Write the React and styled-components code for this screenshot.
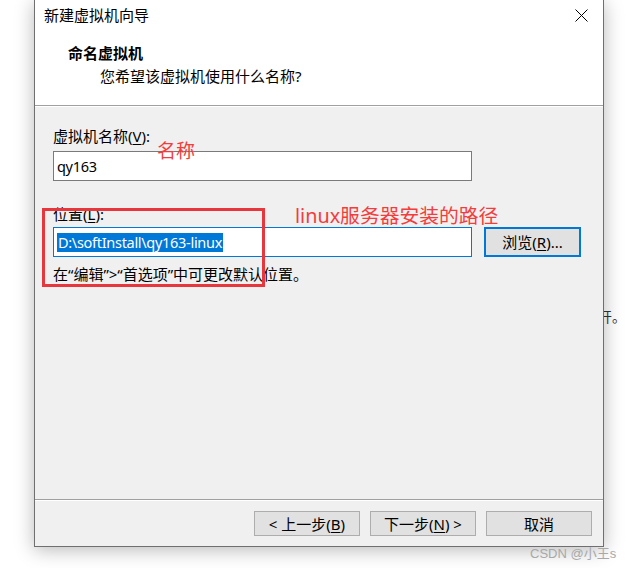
import React from "react";
import styled, { createGlobalStyle } from "styled-components";

const Global = createGlobalStyle`
  html, body {
    margin: 0;
    padding: 0;
    background: #fff;
  }
  * {
    box-sizing: border-box;
  }
`;

const UI_FONT = `"Noto Sans", "Noto Sans CJK SC", sans-serif`;

const Page = styled.div`
  position: relative;
  width: 626px;
  height: 568px;
  overflow: hidden;
  background: #fff;
  padding-left: 34px;
  font-family: ${UI_FONT};
  font-size: 15px;
  color: #000;
`;

const BehindText = styled.div`
  position: absolute;
  left: 598px;
  top: 306px;
  font-size: 14px;
  color: #333;
  font-family: "Noto Sans CJK SC", sans-serif;
`;

const Window = styled.div`
  position: relative;
  width: 570px;
  height: 547px;
  display: flex;
  flex-direction: column;
  border: 1px solid #6f6f6f;
  border-top: none;
  background: #f0f0f0;
  box-shadow: 0 3px 18px rgba(0, 0, 0, 0.28);
`;

const TitleBar = styled.div`
  height: 31px;
  display: flex;
  align-items: center;
  justify-content: space-between;
  padding: 0 15px 1px 9px;
  background: #fff;
  line-height: 20px;
`;

const CloseIcon = () => (
  <svg width="13" height="13" viewBox="0 0 13 13">
    <path d="M0.5 0.5L12.5 12.5M12.5 0.5L0.5 12.5" stroke="#000" strokeWidth="1" fill="none" />
  </svg>
);

const Header = styled.div`
  height: 75px;
  background: #fff;
  padding: 12px 0 0 33px;
  border-bottom: 1px solid #a0a0a0;
  box-shadow: 0 1px 0 #fff;
`;

const HeaderTitle = styled.div`
  font-weight: 700;
  line-height: 20px;
  font-family: "Noto Sans CJK SC", sans-serif;
`;

const HeaderSub = styled.div`
  line-height: 20px;
  margin: 3px 0 0 32px;
`;

const Body = styled.div`
  flex: 1;
  margin-top: 1px;
  padding: 19px 0 0 18px;
  display: flex;
  flex-direction: column;
  border-bottom: 1px solid #a0a0a0;
`;

const Label = styled.div`
  line-height: 20px;
  margin-top: ${({ $gap }) => $gap || 0}px;
`;

const Key = styled.span`
  text-decoration: underline;
  text-underline-offset: 2px;
`;

const Row = styled.div`
  display: flex;
  align-items: center;
  gap: 12px;
  margin-top: 3px;
`;

const TextBox = styled.div`
  width: 419px;
  height: 30px;
  background: #fff;
  border: 1px solid ${({ $focused }) => ($focused ? "#0078d7" : "#7a7a7a")};
  display: flex;
  align-items: center;
  padding-left: 3px;
  margin-top: ${({ $gap }) => $gap || 0}px;
  font-size: 14.5px;
  letter-spacing: -0.3px;
`;

const Selected = styled.span`
  background: #0078d7;
  color: #fff;
  line-height: 19px;
  padding: 0 1px;
`;

const Button = styled.div`
  width: ${({ $w }) => $w || 106}px;
  height: ${({ $h }) => $h || 25}px;
  background: #e1e1e1;
  border: ${({ $default }) => ($default ? "2px solid #0078d7" : "1px solid #adadad")};
  display: flex;
  align-items: center;
  justify-content: center;
  line-height: 20px;
  white-space: pre;
`;

const Hint = styled.div`
  line-height: 20px;
  margin-top: 7px;
`;

const Footer = styled.div`
  height: 46px;
  border-top: 1px solid #fff;
  display: flex;
  justify-content: flex-end;
  gap: 10px;
  padding: 10px 11px 0 0;
`;

const Annotation = styled.div`
  position: absolute;
  left: ${({ $x }) => $x}px;
  top: ${({ $y }) => $y}px;
  color: #f43c3c;
  font-size: ${({ $size }) => $size || 19}px;
  line-height: 24px;
  font-family: "Noto Sans", "Noto Sans CJK SC", sans-serif;
  white-space: nowrap;
`;

const RedBox = styled.div`
  position: absolute;
  left: 42px;
  top: 208px;
  width: 223px;
  height: 79px;
  border: 3px solid #e8373c;
`;

const Watermark = styled.div`
  position: absolute;
  left: 530px;
  top: 543px;
  font-size: 13px;
  color: #a8a8a8;
  font-family: "Liberation Sans", "Noto Sans CJK SC", sans-serif;
`;

export default function App() {
  return (
    <>
      <Global />
      <Page>
        <BehindText>开。</BehindText>
        <Window>
          <TitleBar>
            <span>新建虚拟机向导</span>
            <CloseIcon />
          </TitleBar>
          <Header>
            <HeaderTitle>命名虚拟机</HeaderTitle>
            <HeaderSub>您希望该虚拟机使用什么名称?</HeaderSub>
          </Header>
          <Body>
            <Label>
              虚拟机名称(<Key>V</Key>):
            </Label>
            <TextBox $gap={5}>qy163</TextBox>
            <Label $gap={23}>
              位置(<Key>L</Key>):
            </Label>
            <Row>
              <TextBox $focused>
                <Selected>D:\softInstall\qy163-linux</Selected>
              </TextBox>
              <Button $default $w={97} $h={30}>
                浏览(<Key>R</Key>)...
              </Button>
            </Row>
            <Hint>在“编辑”&gt;“首选项”中可更改默认位置。</Hint>
          </Body>
          <Footer>
            <Button>
              {"< 上一步("}<Key>B</Key>)
            </Button>
            <Button>
              {"下一步("}<Key>N</Key>{") >"}
            </Button>
            <Button>取消</Button>
          </Footer>
        </Window>
        <Annotation $x={157} $y={139}>名称</Annotation>
        <Annotation $x={295} $y={204} $size={19.8}>linux服务器安装的路径</Annotation>
        <RedBox />
        <Watermark>CSDN @小王s</Watermark>
      </Page>
    </>
  );
}
